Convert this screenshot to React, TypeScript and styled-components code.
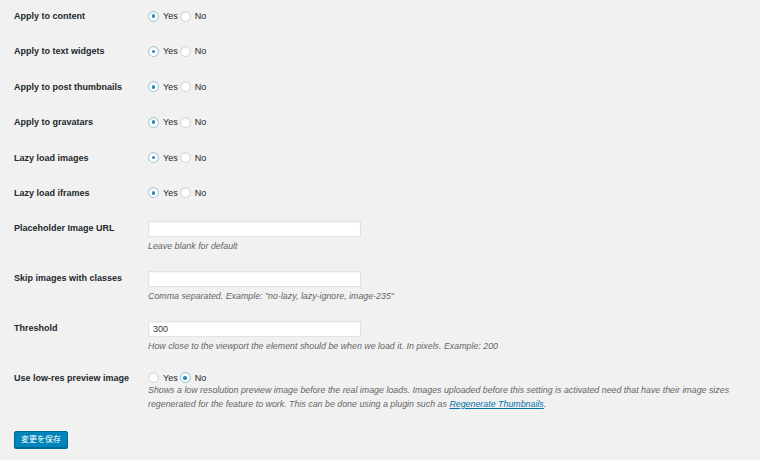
import React from "react";
import styled, { createGlobalStyle, css } from "styled-components";

const GlobalStyle = createGlobalStyle`
  html, body {
    margin: 0;
    padding: 0;
    background: #f1f1f1;
  }
  body {
    font-family: "Liberation Sans", Arial, "Noto Sans CJK JP", sans-serif;
    color: #23282d;
  }
`;

const Page = styled.div`
  width: 760px;
  height: 460px;
  box-sizing: border-box;
  padding: 0 10px 0 14px;
  overflow: hidden;
`;

const FormTable = styled.div`
  display: flex;
  flex-direction: column;
`;

const Row = styled.div<{ kind: "radio" | "field" | "long" }>`
  display: grid;
  grid-template-columns: 134px 1fr;
  box-sizing: border-box;
  padding-top: 9px;

  ${(p) =>
    p.kind === "radio" &&
    css`
      height: 35.4px;
    `}
  ${(p) =>
    p.kind === "field" &&
    css`
      height: 50px;
    `}
`;

const Label = styled.div<{ kind: "radio" | "field" | "long" }>`
  font-size: 9px;
  font-weight: 700;
  line-height: 14px;
  color: #23282d;
  ${(p) =>
    p.kind === "long" &&
    css`
      line-height: 13px;
      padding-top: 1px;
    `}
`;

const Cell = styled.div`
  display: flex;
  flex-direction: column;
  align-items: flex-start;
`;

const RadioGroup = styled.div<{ tight?: boolean }>`
  display: flex;
  align-items: center;
  height: ${(p) => (p.tight ? "13px" : "14px")};
  font-size: 9px;
  color: #23282d;
`;

const RadioLabel = styled.label`
  display: flex;
  align-items: center;
  margin-right: 2px;
`;

const RadioCircle = styled.span<{ checked: boolean }>`
  width: 11px;
  height: 11px;
  box-sizing: border-box;
  border-radius: 50%;
  background: #fff;
  border: 1px solid ${(p) => (p.checked ? "#9fc3d6" : "#d2d4d6")};
  box-shadow: inset 0 1px 2px rgba(0, 0, 0, 0.08);
  margin-right: 4px;
  display: flex;
  align-items: center;
  justify-content: center;

  ${(p) =>
    p.checked &&
    css`
      &::after {
        content: "";
        width: 3.5px;
        height: 3.5px;
        border-radius: 50%;
        background: #1e8cbe;
      }
    `}
`;

const TextInput = styled.div`
  width: 213px;
  height: 16px;
  box-sizing: border-box;
  background: #fff;
  border: 1px solid #e2e2e2;
  box-shadow: inset 0 1px 2px rgba(0, 0, 0, 0.05);
  font-size: 9px;
  line-height: 14px;
  padding-left: 4px;
  color: #32373c;
`;

const Description = styled.p<{ first?: boolean }>`
  margin: ${(p) => (p.first ? "0" : "2.5px 0 0")};
  font-size: 8.85px;
  font-style: italic;
  line-height: 13.5px;
  color: #666;
`;

const Link = styled.a`
  color: #0073aa;
  text-decoration: underline;
`;

const Submit = styled.div`
  padding-top: 17px;
`;

const Button = styled.button`
  height: 17px;
  padding: 0 6px;
  box-sizing: border-box;
  background: #0085ba;
  border: 1px solid #006799;
  border-radius: 2px;
  box-shadow: 0 1px 0 #006799;
  color: #fff;
  font-family: "Noto Sans CJK JP", sans-serif;
  font-size: 8px;
  line-height: 14px;
`;

interface RadioRowProps {
  label: string;
  yes: boolean;
}

const YesNo = ({ yes, tight }: { yes: boolean; tight?: boolean }) => (
  <RadioGroup tight={tight}>
    <RadioLabel>
      <RadioCircle checked={yes} />
      Yes
    </RadioLabel>
    <RadioLabel>
      <RadioCircle checked={!yes} />
      No
    </RadioLabel>
  </RadioGroup>
);

const RadioRow = ({ label, yes }: RadioRowProps) => (
  <Row kind="radio">
    <Label kind="radio">{label}</Label>
    <Cell>
      <YesNo yes={yes} />
    </Cell>
  </Row>
);

const fieldRows = [
  { label: "Placeholder Image URL", value: "", desc: "Leave blank for default" },
  {
    label: "Skip images with classes",
    value: "",
    desc: 'Comma separated. Example: "no-lazy, lazy-ignore, image-235"',
  },
  {
    label: "Threshold",
    value: "300",
    desc: "How close to the viewport the element should be when we load it. In pixels. Example: 200",
  },
];

const radioRows = [
  "Apply to content",
  "Apply to text widgets",
  "Apply to post thumbnails",
  "Apply to gravatars",
  "Lazy load images",
  "Lazy load iframes",
];

export default function App() {
  return (
    <>
      <GlobalStyle />
      <Page>
        <FormTable>
          {radioRows.map((r) => (
            <RadioRow key={r} label={r} yes />
          ))}
          {fieldRows.map((f) => (
            <Row kind="field" key={f.label}>
              <Label kind="field">{f.label}</Label>
              <Cell>
                <TextInput>{f.value}</TextInput>
                <Description>{f.desc}</Description>
              </Cell>
            </Row>
          ))}
          <Row kind="long">
            <Label kind="long">Use low-res preview image</Label>
            <Cell>
              <YesNo yes={false} tight />
              <Description first>
                Shows a low resolution preview image before the real image loads. Images uploaded
                before this setting is activated need that have their image sizes regenerated for
                the feature to work. This can be done using a plugin such as{" "}
                <Link href="#">Regenerate Thumbnails</Link>.
              </Description>
            </Cell>
          </Row>
        </FormTable>
        <Submit>
          <Button>変更を保存</Button>
        </Submit>
      </Page>
    </>
  );
}
